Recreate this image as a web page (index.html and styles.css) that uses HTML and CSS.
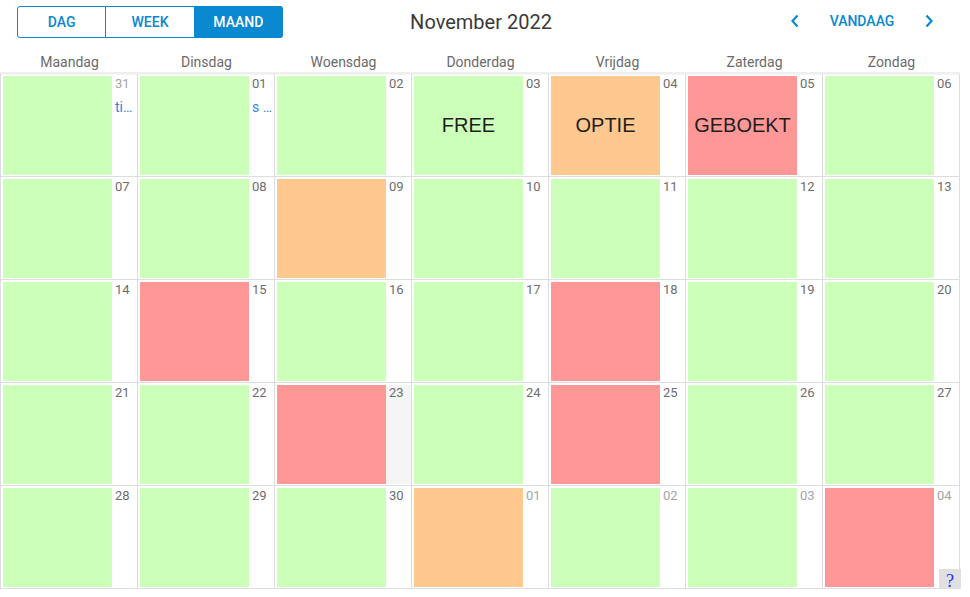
FILE: index.html
```html
<!DOCTYPE html>
<html lang="nl">
<head>
    <meta charset="UTF-8">
    <meta name="viewport" content="width=device-width, initial-scale=1.0">
    <title>Kalender November 2022</title>
    <link rel="stylesheet" href="styles.css">
</head>
<body>
    <div class="calendar">
        <div class="toolbar">
            <div class="view-switch">
                <button class="view-btn">Dag</button>
                <button class="view-btn">Week</button>
                <button class="view-btn active">Maand</button>
            </div>
            <h2 class="title">November 2022</h2>
            <div class="nav">
                <button class="nav-btn" aria-label="Vorige">
                    <svg width="10" height="14" viewBox="0 0 10 14"><path d="M7.5 1.5 2.5 7l5 5.5" fill="none" stroke="currentColor" stroke-width="2.2"/></svg>
                </button>
                <button class="today-btn">Vandaag</button>
                <button class="nav-btn" aria-label="Volgende">
                    <svg width="10" height="14" viewBox="0 0 10 14"><path d="M2.5 1.5 7.5 7l-5 5.5" fill="none" stroke="currentColor" stroke-width="2.2"/></svg>
                </button>
            </div>
        </div>

        <div class="weekdays">
            <div>Maandag</div>
            <div>Dinsdag</div>
            <div>Woensdag</div>
            <div>Donderdag</div>
            <div>Vrijdag</div>
            <div>Zaterdag</div>
            <div>Zondag</div>
        </div>

        <div class="month" id="month"></div>

        <button class="help-btn">?</button>
    </div>

    <script>
        // f = free, o = optie, g = geboekt
        const days = [
            { d: '31', s: 'f', other: true, extra: 'ti…' },
            { d: '01', s: 'f', extra: 's …' },
            { d: '02', s: 'f' },
            { d: '03', s: 'f', label: 'FREE' },
            { d: '04', s: 'o', label: 'OPTIE' },
            { d: '05', s: 'g', label: 'GEBOEKT' },
            { d: '06', s: 'f' },
            { d: '07', s: 'f' }, { d: '08', s: 'f' }, { d: '09', s: 'o' }, { d: '10', s: 'f' },
            { d: '11', s: 'f' }, { d: '12', s: 'f' }, { d: '13', s: 'f' },
            { d: '14', s: 'f' }, { d: '15', s: 'g' }, { d: '16', s: 'f' }, { d: '17', s: 'f' },
            { d: '18', s: 'g' }, { d: '19', s: 'f' }, { d: '20', s: 'f' },
            { d: '21', s: 'f' }, { d: '22', s: 'f' }, { d: '23', s: 'g', today: true }, { d: '24', s: 'f' },
            { d: '25', s: 'g' }, { d: '26', s: 'f' }, { d: '27', s: 'f' },
            { d: '28', s: 'f' }, { d: '29', s: 'f' }, { d: '30', s: 'f' },
            { d: '01', s: 'o', other: true }, { d: '02', s: 'f', other: true },
            { d: '03', s: 'f', other: true }, { d: '04', s: 'g', other: true }
        ];

        const month = document.getElementById('month');
        days.forEach(day => {
            const cell = document.createElement('div');
            cell.className = 'day' + (day.today ? ' today' : '') + (day.other ? ' other' : '');
            cell.innerHTML = `
                <div class="slot slot-${day.s}">${day.label || ''}</div>
                <div class="side">
                    <span class="num">${day.d}</span>
                    ${day.extra ? `<span class="more">${day.extra}</span>` : ''}
                </div>
            `;
            month.appendChild(cell);
        });
    </script>
</body>
</html>
```

FILE: styles.css
```css
body {
    margin: 0;
    padding: 0;
    font-family: Roboto, 'Liberation Sans', sans-serif;
    background: white;
    color: #333;
}

.calendar {
    position: relative;
    width: 960px;
}

.toolbar {
    display: grid;
    grid-template-columns: 1fr auto 1fr;
    align-items: center;
    height: 32px;
    padding: 6px 0 0 17px;
}

.view-switch {
    display: flex;
    width: 266px;
}

.view-btn {
    flex: 1;
    height: 32px;
    border: 1px solid #0a88d0;
    background: white;
    color: #0a88d0;
    font-family: Roboto, sans-serif;
    font-size: 14px;
    font-weight: 500;
    text-transform: uppercase;
    cursor: pointer;
}

.view-btn + .view-btn {
    border-left: none;
}

.view-btn:first-child {
    border-radius: 3px 0 0 3px;
}

.view-btn:last-child {
    border-radius: 0 3px 3px 0;
}

.view-btn.active {
    background: #0a88d0;
    color: white;
}

.title {
    margin: 0 15px 0 0;
    font-size: 20px;
    font-weight: 400;
    color: #3a3a3a;
}

.nav {
    display: flex;
    align-items: center;
    justify-content: flex-end;
    gap: 24px;
    margin-right: 24px;
    margin-top: -3px;
}

.nav-btn,
.today-btn {
    border: none;
    background: none;
    color: #0a88d0;
    padding: 0;
    cursor: pointer;
}

.nav-btn {
    display: flex;
    width: 14px;
    justify-content: center;
}

.today-btn {
    font-family: Roboto, sans-serif;
    font-size: 14px;
    font-weight: 500;
    text-transform: uppercase;
    width: 72px;
}

.weekdays {
    display: grid;
    grid-template-columns: repeat(7, 137px);
    margin-top: 14px;
    padding-left: 1px;
    height: 20px;
    line-height: 20px;
    font-size: 14px;
    color: #6b6b6b;
    text-align: center;
    border-bottom: 2px solid #efefef;
    box-shadow: 0 1px 1px rgba(0, 0, 0, 0.04);
}

.month {
    display: grid;
    grid-template-columns: repeat(7, 137px);
    grid-auto-rows: 103px;
    border-left: 1px solid #ddd;
}

.day {
    display: flex;
    box-sizing: border-box;
    padding: 2px 0 1px 2px;
    border-right: 1px solid #ddd;
    border-bottom: 1px solid #ddd;
}

.day.today .side {
    background: #f5f5f5;
}

.slot {
    width: 109px;
    height: 99px;
    flex-shrink: 0;
    display: flex;
    align-items: center;
    justify-content: center;
    font-family: 'Liberation Sans', Arial, sans-serif;
    font-size: 20px;
    color: #1e1e1e;
}

.slot-f {
    background: #ccffb9;
}

.slot-o {
    background: #ffc88f;
}

.slot-g {
    background: #ff9797;
}

.side {
    flex: 1;
    display: flex;
    flex-direction: column;
    padding: 0 0 0 3px;
    overflow: hidden;
}

.num {
    font-size: 13px;
    color: #6d6d6d;
}

.day.other .num {
    color: #a5a5a5;
}

.more {
    margin-top: 8px;
    font-size: 14px;
    color: #3d7fdc;
    white-space: nowrap;
}

.help-btn {
    position: absolute;
    right: -1px;
    bottom: -4px;
    width: 22px;
    height: 24px;
    border: none;
    background: #e0e0e0;
    color: #2a2aff;
    font-family: 'Liberation Serif', serif;
    font-size: 18px;
    font-weight: normal;
    padding: 0;
    cursor: pointer;
}
```
